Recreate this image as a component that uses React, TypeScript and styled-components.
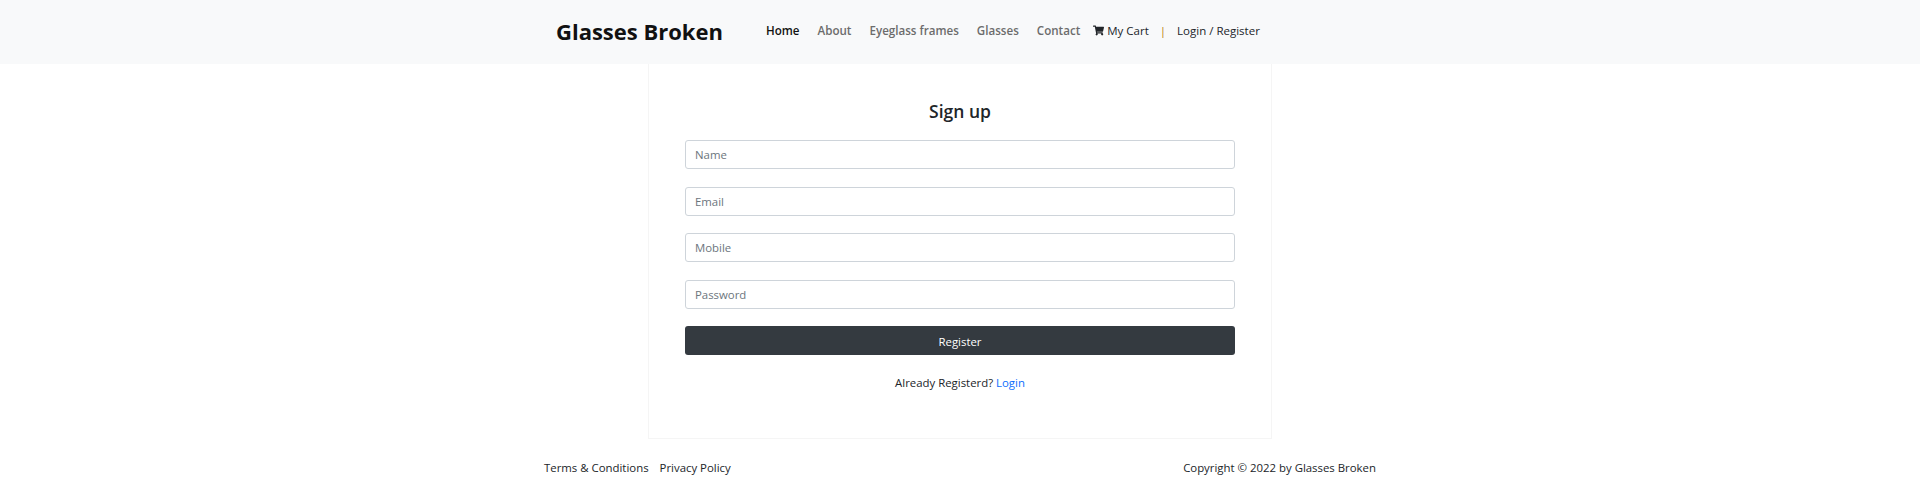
import { createGlobalStyle } from "styled-components";
import styled from "styled-components";
import { FaShoppingCart } from "react-icons/fa";

const GlobalStyle = createGlobalStyle`
    html, body {
        margin: 0;
        padding: 0;
        background: #fff;
        font-family: "Open Sans", "Noto Sans", sans-serif;
        color: #212529;
        font-size: 11.4px;
    }
`

const App = () => {
    return (
        <>
            <GlobalStyle />
            <NavBar>
                <NavInner>
                    <Brand>Glasses Broken</Brand>
                    <NavItems>
                        <NavItem $active>Home</NavItem>
                        <NavItem>About</NavItem>
                        <NavItem>Eyeglass frames</NavItem>
                        <NavItem>Glasses</NavItem>
                        <NavItem>Contact</NavItem>
                    </NavItems>
                    <UserLinks>
                        <CartLink><FaShoppingCart size={11} /> My Cart</CartLink>
                        <Divider>|</Divider>
                        <span>Login / Register</span>
                    </UserLinks>
                </NavInner>
            </NavBar>
            <Card>
                <Title>Sign up</Title>
                <Field placeholder="Name" />
                <Field placeholder="Email" />
                <Field placeholder="Mobile" />
                <Field placeholder="Password" />
                <SubmitButton>Register</SubmitButton>
                <LoginLine>Already Registerd? <a href="#">Login</a></LoginLine>
            </Card>
            <Footer>
                <FooterLinks>
                    <span>Terms &amp; Conditions</span>
                    <span>Privacy Policy</span>
                </FooterLinks>
                <span>Copyright © 2022 by Glasses Broken</span>
            </Footer>
        </>
    )
}

const NavBar = styled.nav`
    height: 64px;
    background: #f8f9fa;
    display: flex;
`

const NavInner = styled.div`
    margin-left: 556px;
    display: flex;
    align-items: center;
    height: 62px;
`

const Brand = styled.div`
    width: 210px;
    font-size: 22px;
    font-weight: 700;
    color: #111;
    white-space: nowrap;
`

const NavItems = styled.div`
    display: flex;
    gap: 18px;
    padding-bottom: 2px;
    font-size: 11.6px;
    font-weight: 600;
`

const NavItem = styled.span<{ $active?: boolean }>`
    color: ${p => p.$active ? "#111" : "#6c6c6c"};
    white-space: nowrap;
`

const UserLinks = styled.div`
    display: flex;
    align-items: center;
    margin-left: 13px;
    padding-bottom: 2px;
    font-size: 11.5px;
    color: #212529;
    white-space: nowrap;
`

const CartLink = styled.span`
    display: flex;
    align-items: center;
    gap: 3px;
`

const Divider = styled.span`
    color: #b8860b;
    margin: 0 11px;
`

const Card = styled.div`
    box-sizing: border-box;
    width: 624px;
    height: 375px;
    margin-left: 648px;
    padding: 34px 36px 0;
    border: 1px solid #f5f5f5;
    border-top: 0;
    display: flex;
    flex-direction: column;
    align-items: stretch;
`

const Title = styled.h1`
    margin: 0 0 16px;
    font-size: 17.5px;
    font-weight: 600;
    line-height: 26px;
    text-align: center;
    color: #212529;
`

const Field = styled.input`
    box-sizing: border-box;
    height: 29px;
    margin-bottom: 17.5px;
    padding: 0 9px;
    border: 1px solid #ced4da;
    border-radius: 3px;
    font: 11.4px "Open Sans", sans-serif;
    &::placeholder {
        color: #6c757d;
    }
`

const SubmitButton = styled.button`
    height: 29px;
    margin-bottom: 19px;
    padding-top: 2px;
    border: 0;
    border-radius: 3px;
    background: #343a40;
    color: #fff;
    font: 11.4px "Open Sans", sans-serif;
`

const LoginLine = styled.div`
    text-align: center;
    font-size: 11.4px;
    line-height: 18px;
    a {
        color: #0d6efd;
        text-decoration: none;
    }
`

const Footer = styled.footer`
    width: 832px;
    margin: 20px 0 0 544px;
    display: flex;
    justify-content: space-between;
    font-size: 11.4px;
    line-height: 18px;
`

const FooterLinks = styled.div`
    display: flex;
    gap: 11px;
`

export default App;
